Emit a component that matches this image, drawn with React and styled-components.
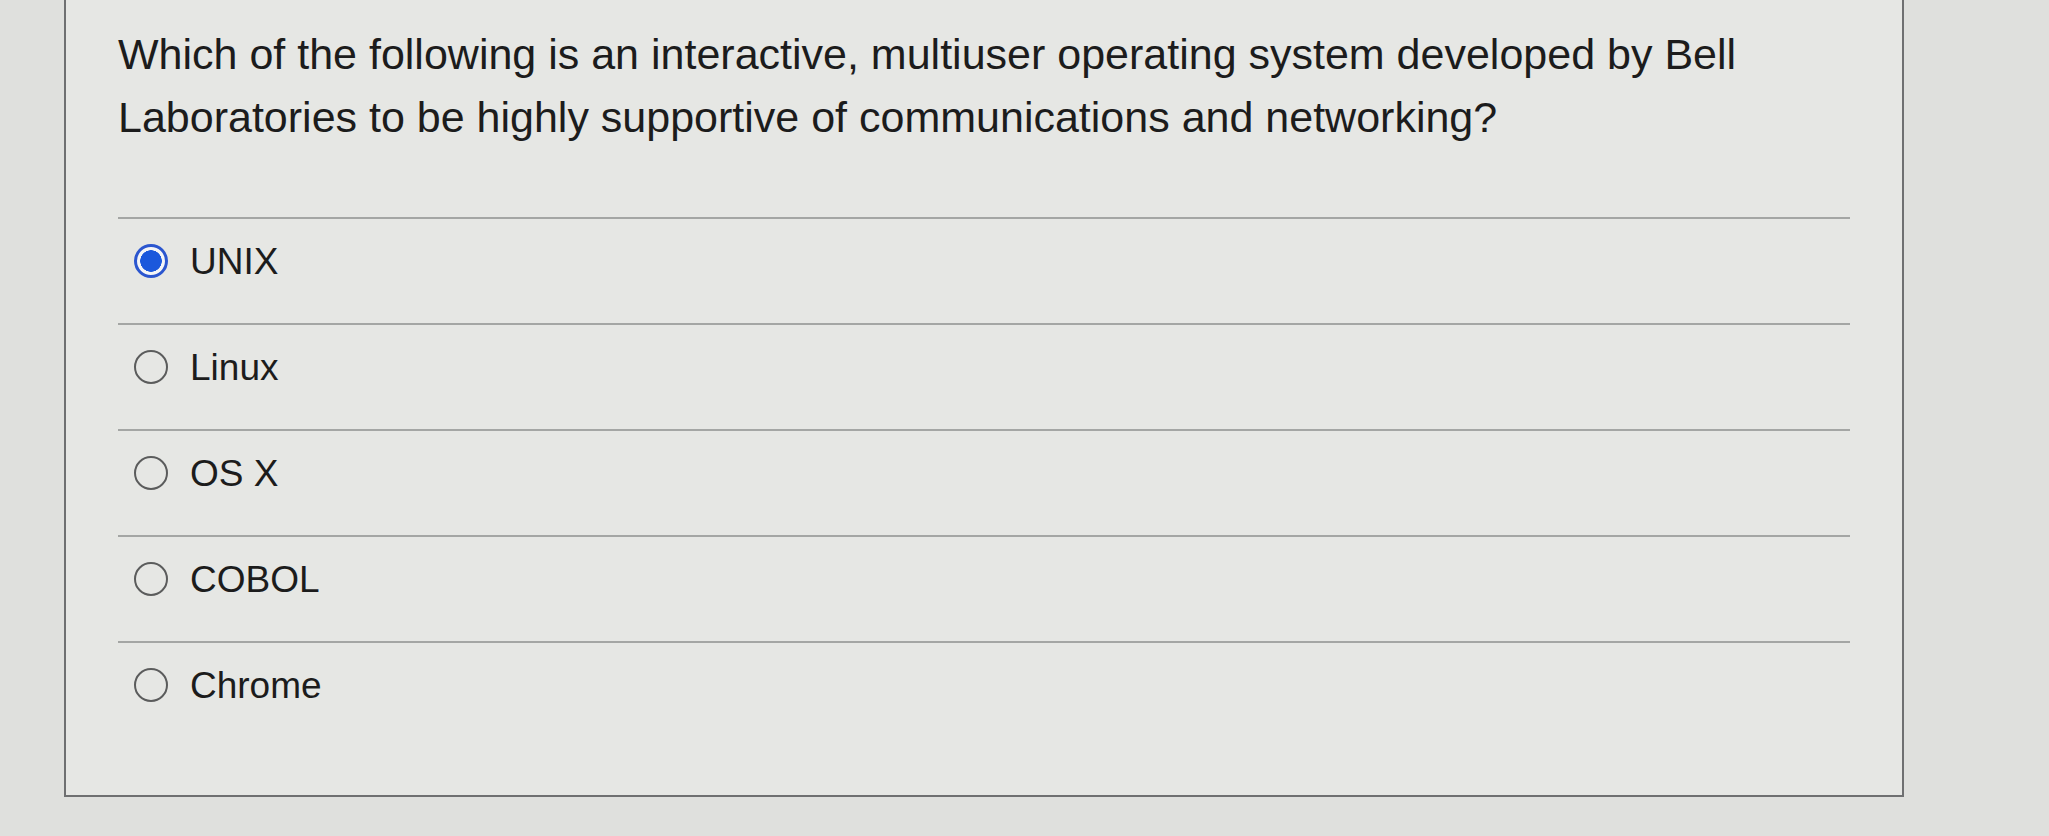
import React from 'react';
import styled, { createGlobalStyle } from 'styled-components';

const GlobalStyle = createGlobalStyle`
  html, body {
    margin: 0;
    padding: 0;
    background: #dfe0dd;
  }
  body {
    font-family: "Liberation Sans", Arial, sans-serif;
    color: #1c1c1c;
  }
`;

const options = ['UNIX', 'Linux', 'OS X', 'COBOL', 'Chrome'];

const App = () => {
  return (
    <Page>
      <GlobalStyle />
      <QuestionCard>
        <Question>
          Which of the following is an interactive, multiuser operating system developed by Bell
          <br />
          Laboratories to be highly supportive of communications and networking?
        </Question>
        <OptionList>
          {options.map((label, i) => (
            <OptionRow key={label}>
              <Radio $checked={i === 0} />
              <OptionLabel>{label}</OptionLabel>
            </OptionRow>
          ))}
        </OptionList>
      </QuestionCard>
    </Page>
  );
};

export default App;

const Page = styled.div`
  width: 2049px;
  height: 836px;
  overflow: hidden;
  background: #dfe0dd;
  padding-left: 64px;
  box-sizing: border-box;
`;

const QuestionCard = styled.div`
  width: 1840px;
  box-sizing: border-box;
  background: #e6e7e4;
  border: 2px solid #6f7071;
  border-top: none;
  padding: 23px 52px 48px 52px;
`;

const Question = styled.div`
  font-size: 43px;
  line-height: 63px;
  color: #1c1c1c;
  margin-bottom: 68px;
`;

const OptionList = styled.div`
  display: flex;
  flex-direction: column;
`;

const OptionRow = styled.label`
  display: flex;
  align-items: center;
  gap: 22px;
  height: 106px;
  box-sizing: border-box;
  border-top: 2px solid #a4a6a4;
  padding: 25px 0 45px 16px;
`;

const Radio = styled.span`
  width: 34px;
  height: 34px;
  box-sizing: border-box;
  border-radius: 50%;
  flex-shrink: 0;
  border: ${(p) => (p.$checked ? '3px solid #2b56cf' : '2px solid #5b5c5c')};
  background: ${(p) =>
    p.$checked
      ? 'radial-gradient(circle, #1b58dc 0 10.5px, #f4f5f7 11px)'
      : 'transparent'};
`;

const OptionLabel = styled.span`
  font-size: 37px;
  line-height: 37px;
  color: #1c1c1c;
`;
